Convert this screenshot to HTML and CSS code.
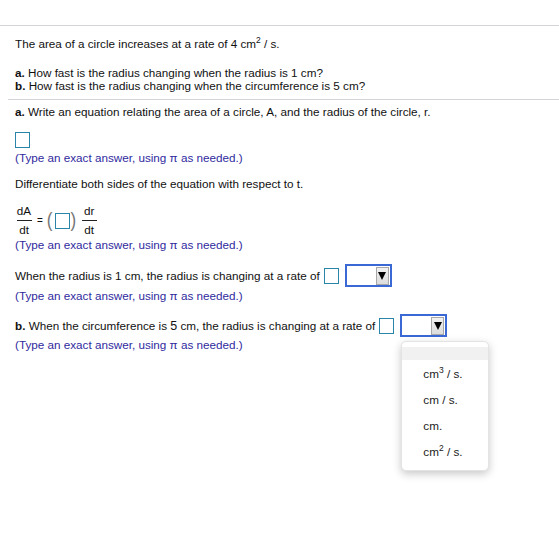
FILE: index.html
```html
<!DOCTYPE html>
<html>
<head>
<meta charset="utf-8">
<link rel="stylesheet" href="styles.css">
</head>
<body>
<div class="rule rule-top"></div>
<div class="stem">
  <p class="line first">The area of a circle increases at a rate of 4 cm<sup>2</sup> / s.</p>
  <p class="line qs"><b>a.</b> How fast is the radius changing when the radius is 1 cm?<br><b>b.</b> How fast is the radius changing when the circumference is 5 cm?</p>
</div>
<div class="rule rule-mid"></div>
<div class="part">
  <p class="line pa"><b>a.</b> Write an equation relating the area of a circle, A, and the radius of the circle, r.</p>
  <div class="box answer-box"></div>
  <p class="line hint h1">(Type an exact answer, using π as needed.)</p>
  <p class="line diff">Differentiate both sides of the equation with respect to t.</p>
  <div class="equation">
    <div class="frac"><span class="num">dA</span><span class="bar"></span><span class="den">dt</span></div>
    <span class="eq">=</span>
    <span class="paren">(</span><div class="box"></div><span class="paren">)</span>
    <div class="frac fr"><span class="num">dr</span><span class="bar"></span><span class="den">dt</span></div>
  </div>
  <p class="line hint h2">(Type an exact answer, using π as needed.)</p>
  <div class="row r1">
    <span>When the radius is 1 cm, the radius is changing at a rate of</span>
    <div class="box"></div>
    <div class="select"><span class="arrow"><i></i></span></div>
  </div>
  <p class="line hint h3">(Type an exact answer, using π as needed.)</p>
  <div class="row r2">
    <span><b>b.</b> When the circumference is <span class="five">5</span> cm, the radius is changing at a rate of</span>
    <div class="box"></div>
    <div class="select-wrap">
      <div class="select"><span class="arrow"><i></i></span></div>
      <div class="menu">
        <div class="opt blank"></div>
        <div class="opt">cm<sup>3</sup> / s.</div>
        <div class="opt">cm / s.</div>
        <div class="opt">cm.</div>
        <div class="opt">cm<sup>2</sup> / s.</div>
      </div>
    </div>
  </div>
  <p class="line hint h4">(Type an exact answer, using π as needed.)</p>
</div>
</body>
</html>
```
FILE: styles.css
```css
html, body {
  margin: 0;
  padding: 0;
  background: #fff;
}
body {
  font-family: "Liberation Sans", Arial, sans-serif;
  font-size: 11.7px;
  line-height: 13px;
  color: #111;
  min-height: 550px;
}
p { margin: 0; }
b { font-weight: bold; }
sup {
  font-size: 8.5px;
  line-height: 0;
  vertical-align: 5px;
}
.rule {
  height: 0;
  border-top: 1px solid #d3d4da;
}
.rule-top { margin-top: 25px; }
.rule-mid { margin: 7px 0 0 8px; }
.stem, .part { padding: 0 15px; }
.first { margin-top: 11px; }
.qs { margin-top: 16px; }
.pa { margin-top: 5px; }
.hint { color: #2f2a9e; }
.box {
  width: 13px;
  height: 14px;
  border: 1.5px solid #2a85a8;
  background: #fff;
  flex: none;
}
.answer-box { margin-top: 14px; }
.h1 { margin-top: 3px; }
.diff { margin-top: 13px; }
.equation {
  margin-top: 13px;
  display: flex;
  align-items: center;
  height: 33px;
}
.frac {
  display: flex;
  flex-direction: column;
  align-items: center;
  width: 16px;
  margin-left: 1px;
}
.frac .bar {
  width: 15px;
  height: 0;
  border-top: 1px solid #222;
  margin: 3px 0 2px;
}
.eq {
  margin: 2px 4px 0 5px;
  font-size: 10px;
}
.paren {
  color: #777;
  font-size: 17px;
  line-height: 20px;
  transform: scaleY(1.2);
  margin-top: 2px;
}
.equation .box { margin: 3px 1px 0 2px; }
.frac.fr { margin-left: 5px; }
.h2 { margin-top: 2px; }
.row {
  display: flex;
  align-items: center;
  height: 23px;
}
.r1 { margin-top: 13px; }
.r2 { margin-top: 12px; }
.row .box { margin-left: 4px; }
.select {
  width: 43px;
  height: 19px;
  margin-left: 6px;
  border: 2px solid #3a69d6;
  display: flex;
  justify-content: flex-end;
  align-items: center;
  flex: none;
}
.select-wrap {
  position: relative;
  flex: none;
}
.arrow {
  width: 11px;
  height: 16px;
  margin-right: 1px;
  background: linear-gradient(#f2f2f2, #dcdcdc);
  border: 1px solid #a8a8a8;
  display: flex;
  align-items: center;
  justify-content: center;
}
.arrow i {
  width: 0;
  height: 0;
  border-left: 4px solid transparent;
  border-right: 4px solid transparent;
  border-top: 8px solid #000;
}
.h3 { margin-top: 2px; }
.h4 { margin-top: 1px; }
.five { font-size: 12.5px; }
.menu {
  position: absolute;
  top: 27px;
  left: 7px;
  width: 86px;
  height: 119px;
  padding: 5px 0 4px;
  background: #fff;
  border: 1px solid #e4e4e4;
  border-radius: 5px;
  box-shadow: 0 3px 8px rgba(0, 0, 0, 0.22);
  color: #222;
  z-index: 5;
}
.opt {
  height: 26px;
  line-height: 26px;
  padding-left: 21px;
  white-space: nowrap;
}
.opt.blank {
  height: 13px;
  margin-bottom: 1px;
  background: #f1f1f1;
}
.opt sup { vertical-align: 5px; }
```
